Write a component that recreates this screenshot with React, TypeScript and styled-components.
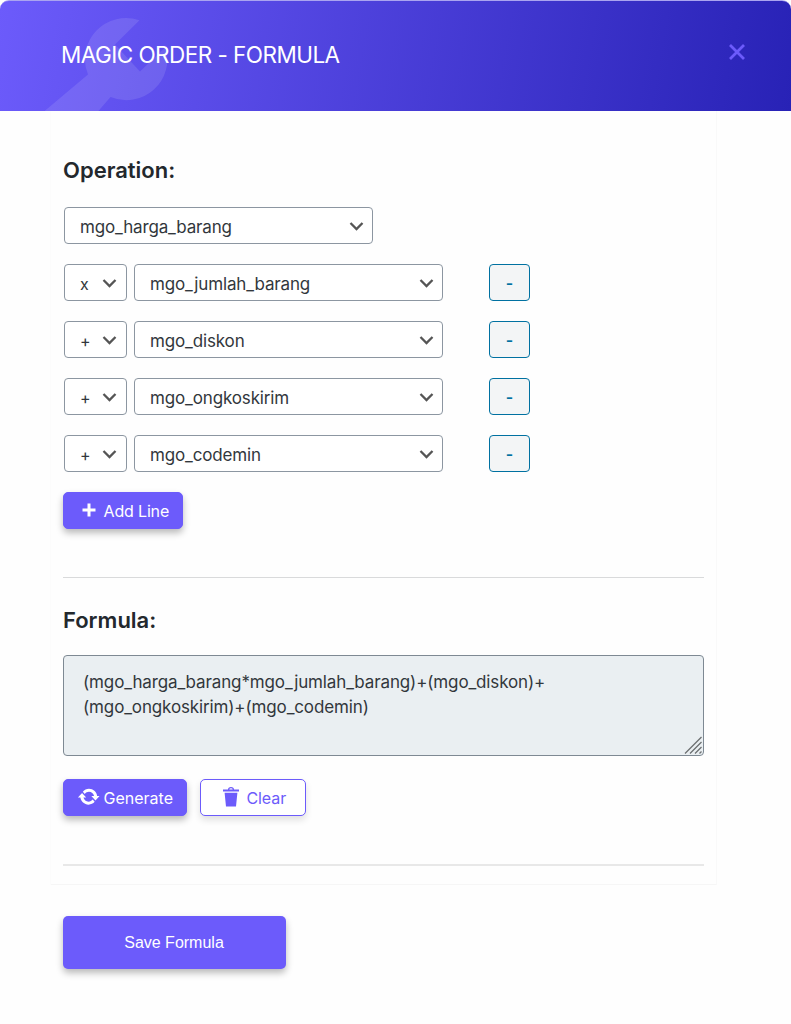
import React from "react";
import styled, { createGlobalStyle } from "styled-components";

const GlobalStyle = createGlobalStyle`
  * { box-sizing: border-box; }
  body {
    margin: 0;
    background: #fff;
    font-family: Inter, "Liberation Sans", sans-serif;
    color: #32373c;
  }
`;

const Modal = styled.div`
  width: 791px;
  height: 1024px;
  background: #fefefe;
  overflow: hidden;
`;

const Header = styled.header`
  position: relative;
  display: flex;
  justify-content: space-between;
  height: 111px;
  padding: 0 45px 0 61px;
  border-top: 1px solid #aaa4f0;
  border-radius: 9px 9px 0 0;
  background: linear-gradient(100deg, #6c5bfb 0%, #2822b6 100%);
  overflow: hidden;
`;

const Wrench = styled.svg`
  position: absolute;
  left: 40px;
  top: 9px;
`;

const Title = styled.h1`
  position: relative;
  margin: 0;
  padding-top: 40px;
  font-size: 22.5px;
  line-height: 28px;
  font-weight: 400;
  letter-spacing: -0.54px;
  white-space: nowrap;
  color: #fff;
`;

const CloseButton = styled.button`
  display: flex;
  align-self: flex-start;
  margin-top: 42px;
  padding: 0;
  border: 0;
  background: none;
`;

const Panel = styled.section`
  width: 666px;
  height: 774px;
  margin-left: 51px;
  padding: 44px 12px 0 12px;
  border-right: 1px solid #f9f9f9;
  border-bottom: 1px solid #f6f6f6;
  box-shadow: -1px 0 0 #fcfcfc;
`;

const Heading = styled.h2`
  margin: 0;
  font-size: 22px;
  line-height: 30px;
  font-weight: 600;
  letter-spacing: 0;
  color: #23282d;
`;

const Rows = styled.div`
  display: flex;
  flex-direction: column;
  gap: 20px;
  padding: 22px 0 20px 1px;
`;

const Row = styled.div`
  display: flex;
`;

const SelectBox = styled.div<{ $width: number; $compact?: boolean }>`
  display: flex;
  align-items: center;
  justify-content: space-between;
  width: ${(p) => p.$width}px;
  height: 37px;
  margin-right: 7px;
  padding: 0 ${(p) => (p.$compact ? 9 : 8.5)}px 0 15px;
  border: 1px solid #8c96a1;
  border-radius: 4px;
  background: #fff;
  font-size: ${(p) => (p.$compact ? 16 : 17)}px;
`;

const Label = styled.span<{ $spacing?: number; $drop?: number }>`
  padding-top: ${(p) => p.$drop || 0}px;
  letter-spacing: ${(p) => p.$spacing || 0}px;
`;

const RemoveButton = styled.button`
  width: 41px;
  height: 37px;
  margin-left: 39px;
  padding: 0;
  border: 1px solid #0071a1;
  border-radius: 4px;
  background: #f3f5f6;
  color: #0071a1;
  font: 600 16px Inter, sans-serif;
`;

const ActionButton = styled.button<{ $width: number; $inset: number; $gap: number; $outline?: boolean }>`
  display: flex;
  align-items: center;
  gap: ${(p) => p.$gap}px;
  width: ${(p) => p.$width}px;
  height: 37px;
  padding: 0 0 0 ${(p) => p.$inset}px;
  border: 1px solid #6c5bfb;
  border-radius: 5px;
  background: ${(p) => (p.$outline ? "#fff" : "#6c5bfb")};
  color: ${(p) => (p.$outline ? "#6c5bfb" : "#fff")};
  box-shadow: 0 4px 7px rgba(0, 0, 0, ${(p) => (p.$outline ? 0.12 : 0.27)});
  font: 400 16px Inter, sans-serif;

  svg {
    flex: none;
    margin-bottom: 2px;
  }
`;

const SaveButton = styled.button`
  width: 223px;
  height: 53px;
  padding: 0;
  border: 0;
  border-radius: 5px;
  background: #6c5bfb;
  color: #fff;
  box-shadow: 0 4px 7px rgba(0, 0, 0, 0.27);
  font: 400 16px "Liberation Sans", Arial, sans-serif;
`;

const Divider = styled.hr<{ $soft?: boolean }>`
  height: ${(p) => (p.$soft ? 2 : 1)}px;
  margin: 48px 0 0;
  border: 0;
  background: ${(p) => (p.$soft ? "#e8e8e8" : "#d9dadb")};
`;

const FormulaHeading = styled.div`
  padding: 27px 0 20px;
`;

const FormulaBox = styled.div`
  position: relative;
  height: 101px;
  padding: 14px 19px;
  border: 1px solid #7e8993;
  border-radius: 4px;
  background: #eaeff2;
  font-size: 17px;
  line-height: 25px;
`;

const ResizeGrip = styled.svg`
  position: absolute;
  right: 0;
  bottom: 0;
`;

const Actions = styled.div`
  display: flex;
  gap: 13px;
  padding-top: 23px;
`;

const Footer = styled.footer`
  padding: 31px 0 0 62.5px;
`;

const Chevron = () => (
  <svg width="15" height="11" viewBox="0 0 15 11" fill="none">
    <path d="M1.5 3 L7.5 9 L13.5 3" stroke="#555" strokeWidth="2.3" />
  </svg>
);

const PlusIcon = () => (
  <svg width="14" height="14" viewBox="0 0 14 14">
    <path d="M7 .5v13M0.5 7h13" stroke="currentColor" strokeWidth="3" />
  </svg>
);

const RefreshIcon = () => (
  <svg width="23.5" height="23.5" viewBox="0 0 20 20">
    <path
      d="M10.2 3.28c3.53 0 6.43 2.61 6.92 6h2.08l-3.5 4-3.5-4h2.32c-.45-1.97-2.21-3.45-4.32-3.45-1.45 0-2.73.71-3.54 1.78L4.95 5.66C6.23 4.2 8.11 3.28 10.2 3.28zm-.4 13.44c-3.52 0-6.43-2.61-6.92-6H.8l3.5-4c1.17 1.33 2.33 2.67 3.5 4H5.48c.45 1.97 2.21 3.45 4.32 3.45 1.45 0 2.73-.71 3.54-1.78l1.71 1.95c-1.28 1.46-3.15 2.38-5.25 2.38z"
      fill="currentColor"
    />
  </svg>
);

const TrashIcon = () => (
  <svg width="16" height="20" viewBox="0 0 16 20">
    <path d="M0 2.5h5a3 2.5 0 0 1 6 0h5v2H0zM6.3 2.5h3.4a1.7 1.2 0 0 0-3.4 0zM1.6 5.7h12.8l-1.4 13.8H3z" fill="currentColor" fillRule="evenodd" />
  </svg>
);

const lines = [
  { op: "x", name: "mgo_jumlah_barang" },
  { op: "+", name: "mgo_diskon" },
  { op: "+", name: "mgo_ongkoskirim" },
  { op: "+", name: "mgo_codemin" },
];

export default function App() {
  return (
    <Modal>
      <GlobalStyle />
      <Header>
        <Wrench width="130" height="102" viewBox="40 10 130 102">
          <path
            d="M139.5 20.3A41 41 0 0 0 88 74.5L44 111.5H98L110.5 97A41 41 0 0 0 165.5 47L140 71.5L115 44.5Z"
            fill="#fff"
            fillOpacity=".11"
          />
        </Wrench>
        <Title>MAGIC ORDER - FORMULA</Title>
        <CloseButton aria-label="Close">
          <svg width="18" height="18" viewBox="0 0 18 18">
            <path d="M2 2L16 16M16 2L2 16" stroke="#6c5bfb" strokeWidth="2.8" />
          </svg>
        </CloseButton>
      </Header>
      <Panel>
        <Heading>Operation:</Heading>
        <Rows>
          <Row>
            <SelectBox $width={309}>
              <Label $spacing={-0.16} $drop={2}>mgo_harga_barang</Label>
              <Chevron />
            </SelectBox>
          </Row>
          {lines.map((line) => (
            <Row key={line.name}>
              <SelectBox $width={63} $compact>
                <Label $drop={2}>{line.op}</Label>
                <Chevron />
              </SelectBox>
              <SelectBox $width={309}>
                <Label $spacing={-0.14} $drop={2}>{line.name}</Label>
                <Chevron />
              </SelectBox>
              <RemoveButton>-</RemoveButton>
            </Row>
          ))}
        </Rows>
        <ActionButton $width={120} $inset={18} $gap={7.5}>
          <PlusIcon />
          <Label $spacing={-0.16} $drop={1}>Add Line</Label>
        </ActionButton>
        <Divider />
        <FormulaHeading>
          <Heading>Formula:</Heading>
        </FormulaHeading>
        <FormulaBox>
          <Label $spacing={-0.13}>
            (mgo_harga_barang*mgo_jumlah_barang)+(mgo_diskon)+
            <br />
            (mgo_ongkoskirim)+(mgo_codemin)
          </Label>
          <ResizeGrip width="19" height="19" viewBox="0 0 19 19">
            <path d="M1 17.5L17.5 1M6 17.5L17.5 6M11 17.5L17.5 11M15.5 17.5L17.5 15.5" stroke="#6d7072" strokeWidth="1.3" />
          </ResizeGrip>
        </FormulaBox>
        <Actions>
          <ActionButton $width={124} $inset={12.5} $gap={3.5}>
            <RefreshIcon />
            <Label>Generate</Label>
          </ActionButton>
          <ActionButton $width={106} $inset={22} $gap={7.5} $outline>
            <TrashIcon />
            <Label $spacing={-0.1}>Clear</Label>
          </ActionButton>
        </Actions>
        <Divider $soft />
      </Panel>
      <Footer>
        <SaveButton>Save Formula</SaveButton>
      </Footer>
    </Modal>
  );
}
